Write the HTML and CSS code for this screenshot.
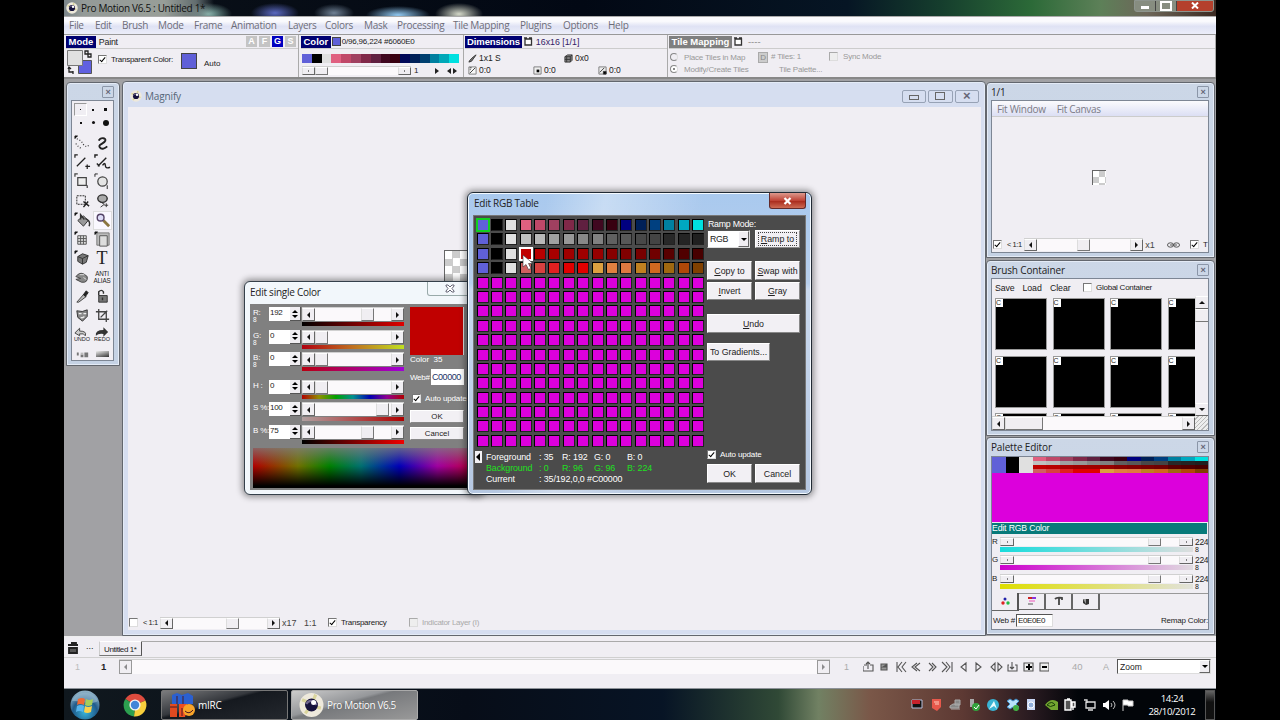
FILE: index.html
```html
<!DOCTYPE html>
<html lang="en">
<head>
<meta charset="utf-8">
<title>Pro Motion V6.5 : Untitled 1*</title>
<link rel="stylesheet" href="styles.css">
</head>
<body>
<svg width="0" height="0" class="defs">
<symbol id="eye" viewBox="0 0 24 24"><circle cx="12" cy="12" r="11.5" fill="#eee9dc"/><path d="M3 7l5 2M16 2l-2 5M21 15l-5-1M6 20l3-4" stroke="#d9d49c" stroke-width="3"/><circle cx="12" cy="12" r="6.2" fill="#16123c"/><path d="M7 11c3-5 8-3 10 1" stroke="#6f668f" stroke-width="2" fill="none"/><circle cx="14" cy="9.5" r="2.4" fill="#fff"/></symbol>
<symbol id="page" viewBox="0 0 9 9"><path d="M1 2h6.500v6H1zM0 .8h3M5 .8h3" fill="#fff" stroke="#333" stroke-width="1.300"/></symbol>
<symbol id="corner" viewBox="0 0 10 10"><path d="M1 1h8v8H1z" fill="#f8f8f8" stroke="#777"/><path d="M2 8l6-6M2 2h2M2 4h1" stroke="#333"/></symbol>
</svg>
<div class="screen">
<div class="app">
<header class="titlebar"><svg class="appicon"><use href="#eye"/></svg><span>Pro Motion V6.5 : Untitled 1*</span>
<div class="winctl"><i class="min"></i><i class="max"></i><b><svg width="8" height="7" viewBox="0 0 8 7"><path d="M1 .5l6 6M7 .5l-6 6" stroke="#fff" stroke-width="2"/></svg></b></div></header>
<nav class="menubar"><span>File</span><span>Edit</span><span>Brush</span><span>Mode</span><span>Frame</span><span>Animation</span><span>Layers</span><span>Colors</span><span>Mask</span><span>Processing</span><span>Tile Mapping</span><span>Plugins</span><span>Options</span><span>Help</span></nav>
<section class="toolbar">
<div class="panel mode"><div class="phead"><b class="tag">Mode</b><span class="paint">Paint</span><span class="flags"><b>A</b><b>F</b><b class="on">G</b><b>S</b></span></div>
<div class="modebody"><svg width="31" height="26" viewBox="0 0 31 26"><path d="M12.500 11.500h13v13h-13z" fill="#6060e0" stroke="#555"/><path d="M1.500 1.500h15v15h-15z" fill="#e0e0e0" stroke="#777"/><path d="M19 2h3v3h-3zM22 5h3v3h-3zM3 19v4h4M2 20l1-2 2 2M7 22v3" fill="none" stroke="#222" stroke-width="1.300"/></svg><i class="chk on"></i><span class="tc">Transparent Color:</span><i class="autosw"></i><span class="auto">Auto</span></div></div>
<div class="panel color"><div class="phead"><b class="tag">Color</b><i class="minisw"></i><span class="cval">0/96,96,224 #6060E0</span></div>
<div class="strip" data-colors="#6060d8,#000,#e0e0e0,#e06080,#c04868,#a04060,#802848,#602040,#400820,#380010,#000858,#002058,#004070,#0080a0,#00a8b8,#00e0e0"></div>
<div class="colscroll"><div class="scroll" data-thumb="0" data-size="13"></div><span>1</span><svg width="22" height="8" viewBox="0 0 22 8"><path d="M0 1l4 3-4 3zM16 1v6l-4-3zM18 1l4 3-4 3z" fill="#222"/></svg></div></div>
<div class="panel dims"><div class="phead"><b class="tag">Dimensions</b><svg class="pg"><use href="#page"/></svg><span class="dv">16x16 [1/1]</span></div>
<div class="drow"><span><svg viewBox="0 0 10 10"><path d="M1 9l3-1 5-7-3 2-4 4z" fill="#777" stroke="#333"/></svg>1x1 S</span><span class="wide"><svg viewBox="0 0 10 10"><path d="M1 3l3-2h5v6L7 9H1zM1 3h6v6M7 3l2-2M1 6h6M3 3v6" fill="#888" stroke="#333"/></svg>0x0</span></div>
<div class="drow three"><span><svg><use href="#corner"/></svg>0:0</span><span><svg viewBox="0 0 10 10"><path d="M1 1h8v8H1z" fill="#eee" stroke="#777"/><path d="M4 4h3v3H4z"/></svg>0:0</span><span><svg viewBox="0 0 10 10"><path d="M1 1h8v8H1z" fill="#eee" stroke="#777"/><path d="M2 7l5-5M6 6h3v3H6z" stroke="#333"/></svg>0:0</span></div></div>
<div class="panel tile"><div class="phead"><b class="tag gray">Tile Mapping</b><svg class="pg"><use href="#page"/></svg><span class="dash">----</span></div>
<div class="tgrid"><i class="radio"></i><span>Place Tiles in Map</span><em>D</em><span># Tiles: 1</span><i class="chk off"></i><span class="sync">Sync Mode</span><i class="radio on"></i><span>Modify/Create Tiles</span><span></span><span class="tp">Tile Palette...</span></div></div>
</section>
<main class="workspace"></main>
<footer class="frames"><div class="tabs"><svg class="trash" viewBox="0 0 12 13"><path d="M1 4h10M4 2h5v2M2 7h8v5H2z" fill="#555" stroke="#222" stroke-width="1.800"/></svg><span class="dots">...</span><span class="tab">Untitled 1*</span><i class="rest"></i></div>
<div class="timeline"><span class="n1">1</span><b>1</b><div class="scroll disabled" data-thumb="none"></div><span class="n2">1</span>
<svg class="play" width="186" height="12" viewBox="0 0 186 12" fill="none" stroke="#555" stroke-width="1.100"><path d="M1 4h3M7 4h3v6H0V5M5 8V1M3 3l2-2 2 2"/><path d="M18 3h6v6h-6zM20 6h3V4z" fill="#999"/><path d="M34 1v10M39 1l-4 5 4 5M43 1l-4 5 4 5M57 2l-5 4 5 4M54 2l-5 4 5 4M66 2l4 4-4 4M69 2l4 4-4 4M79 1l5 5-5 5M83 1l4 5-4 5M89 1v10M103 2v8l-5-4zM113 2v8l5-4zM132 2v8l-4-4zM135 2v8l4-4z"/><path d="M146 4h-1v6h9V4h-2M149 1v7M147 6l2 2 2-2"/><path d="M161 2h9v8h-9zM177 2h9v8h-9z" fill="#eee"/><path d="M163 6h6M166 3v6M179 6h5" stroke="#000" stroke-width="2"/></svg>
<span class="n40">40</span><span class="na">A</span><div class="select">Zoom<i></i></div></div></footer>
<div class="taskbar"><svg class="orb" viewBox="0 0 30 30"><defs><radialGradient id="og" cx=".5" cy=".75" r=".7"><stop offset="0" stop-color="#38b5dc"/><stop offset=".6" stop-color="#205b8b"/><stop offset="1" stop-color="#8cafc5"/></radialGradient></defs><circle cx="15" cy="15" r="14.500" fill="url(#og)"/><path d="M2 11C6 0 24 0 28 11c-8 5-18-1-26 0z" fill="#9bbdd0" opacity=".6"/><path d="M8 9q4-2 7 0l-1 6q-4-2-7 0z" fill="#ef6a34"/><path d="M16 9q3 2 7 0l-1 6q-4 2-7 0z" fill="#a6ce5a"/><path d="M7 16q4-2 7 0l-1 6q-4-2-7 0z" fill="#58b5ed"/><path d="M15 16q3 2 7 0l-1 6q-4 2-7 0z" fill="#fbd14c"/></svg>
<svg class="chrome" viewBox="0 0 24 24"><path d="M12 12L2.300 6A11.500 11.500 0 0 1 22.500 7.500z" fill="#dd4b3e"/><path d="M12 12l10.500-4.500A11.500 11.500 0 0 1 11 23.500z" fill="#f8cf3c"/><path d="M12 12l-1 11.500A11.500 11.500 0 0 1 2.300 6z" fill="#2c9f4f"/><circle cx="12" cy="12" r="5.600" fill="#f4f4f4"/><circle cx="12" cy="12" r="4.200" fill="#4285d8"/></svg>
<div class="task"><svg viewBox="0 0 26 26"><path d="M3 12V3l5-2 5 2 6-2 5 3v8z" fill="#2b60d0"/><path d="M1 12h7v13H1z" fill="#e14a20"/><path d="M10 12h8v6l-2 7h-6z" fill="#ed4e22"/><circle cx="20" cy="18" r="6" fill="#f7a429"/><path d="M8 4v8M14 4v8M1 15h7M13 16v8M16 19q4 4 8-1" stroke="#4a1a24" fill="none"/></svg><span>mIRC</span></div>
<div class="task active"><svg viewBox="0 0 24 24"><use href="#eye"/></svg><span>Pro Motion V6.5</span></div>
<svg class="tray" width="224" height="14" viewBox="0 0 224 14"><path d="M1 2h10v8H1z" fill="#111" stroke="#b8c0dc"/><path d="M1 2h8v4H1z" fill="#c6222b"/><path d="M21 1h9v8l-4 4-5-3z" fill="#e7584b"/><path d="M23 4h5M24 6h4" stroke="#ffd0c0"/><path d="M39 8l3-2h6v4h-9zM44 2h5v5h-5zM40 11h9" fill="#888" stroke="#aaa"/><path d="M59 1h4v8h-4z" fill="#aaa"/><circle cx="65" cy="9" r="4" fill="#33a33c"/><path d="M63 9l2 2 3-4" stroke="#fff" fill="none"/><circle cx="82" cy="7" r="6" fill="#39b3d4"/><path d="M78 11l5-8 3 8-3-3z" fill="#eafcff"/><path d="M96 3l3-2 3 2 3-2 3 2-3 3 3 3-3 2-3-2-3 2-3-2 3-3z" fill="#b9e2fa" stroke="#418bc4"/><circle cx="105" cy="10" r="3" fill="#43b044"/><path d="M116 1h8v11h-8z" fill="#c8d6f4"/><circle cx="120" cy="7" r="3" fill="#91aeda" stroke="#fff"/><path d="M134 7q6-8 13-3v8h-7z" fill="#73a730"/><path d="M136 7q5-5 8 0-5 3-8 0" fill="none" stroke="#183c08"/><path d="M154 2h6v10h-6zM156 1h3M161 4h3v5h-3zM162 9v3" fill="#555" stroke="#fff" stroke-width="1.400"/><path d="M175 4h9v6h-9zM173 2h3v3M177 12h5" stroke="#ddd" fill="none" stroke-width="1.300"/><path d="M192 5h2l4-3v10l-4-3h-2z" fill="#fff"/><path d="M200 5q2 2 0 4M202 3q4 4 0 8" stroke="#bbb" fill="none"/><path d="M212 13V2h5v1h5v5h-5V7h-5" fill="#fff" stroke="#ccc"/></svg>
<div class="clock">14:24<br>28/10/2012</div><i class="desk"></i></div>
</div>

<section class="win tools"><div class="wtitle"><i class="x"></i></div><div class="inner">
<div class="dots6"><i></i><i></i><i></i><i></i><i></i><i></i></div>
<div class="toolgrid">
<svg viewBox="0 0 18 18"><path d="M1 4V1h3" stroke="#222"/><path d="M3 4q5 2 7 6t7 0M2 9q3 5 7 5" fill="none" stroke="#333" stroke-width="1.300" stroke-dasharray="1 2"/></svg>
<svg viewBox="0 0 18 18"><path d="M5 6C7 2 13 3 12 6S4 10 6 13s6 1 8-1" fill="none" stroke="#222" stroke-width="2"/></svg>
<svg viewBox="0 0 18 18"><path d="M1 4V1h3M3 13L12 4M14 11v5M12 13h5" stroke="#222" fill="none" stroke-width="1.300"/></svg>
<svg viewBox="0 0 18 18"><path d="M1 4V1h3M4 13l9-9M3 10l3 3M9 12q3-4 3 0t5 2" stroke="#222" fill="none" stroke-width="1.500"/></svg>
<svg viewBox="0 0 18 18"><path d="M1 4V1h3M4 5h9v8H4zM14 13v3" stroke="#444" fill="#eee" stroke-width="1.300"/></svg>
<svg viewBox="0 0 18 18"><path d="M1 4V1h3M14 13v4" stroke="#222" fill="none"/><circle cx="9" cy="9" r="5" fill="#e4e4e4" stroke="#444" stroke-width="1.300"/></svg>
<svg viewBox="0 0 18 18"><path d="M3 4h9v9H3z" fill="none" stroke="#222" stroke-dasharray="2 1"/><path d="M10 10l6 5M15 10l-5 6" stroke="#222" stroke-width="1.500"/></svg>
<svg viewBox="0 0 18 18"><ellipse cx="9" cy="7" rx="5" ry="4" fill="#aaa" stroke="#333" stroke-width="1.500"/><path d="M6 10l5 3-4 3M13 12v4M11 14h4" stroke="#333" fill="none"/></svg>
<svg viewBox="0 0 18 18"><path d="M1 4V1h3" stroke="#222"/><path d="M4 9l6-5 5 5-5 6z" fill="#999" stroke="#333"/><path d="M12 7q6 2 4 8M7 8V3l4 5" stroke="#333" fill="none" stroke-width="1.500"/></svg>
<svg class="sel" viewBox="0 0 18 18"><path d="M10 9l6 6" stroke="#8b7640" stroke-width="3"/><circle cx="7" cy="6" r="3.600" fill="#dddcf6" stroke="#554467" stroke-width="1.500"/></svg>
<svg viewBox="0 0 18 18"><path d="M1 4V1h3" stroke="#222"/><path d="M4 5h9v9H4zM4 8h9M4 11h9M7 5v9M10 5v9" stroke="#555" fill="#ddd"/></svg>
<svg viewBox="0 0 18 18"><path d="M3 2h13v13H3z" fill="#bbb" stroke="#777"/><path d="M6 5h8v11H6z" fill="#ddd" stroke="#555"/><path d="M1 4V1h3" stroke="#222"/></svg>
<svg viewBox="0 0 18 18"><path d="M1 4V1h3" stroke="#222"/><path d="M4 7l5-3 6 2-2 7-4 2-5-3zM4 7l5 2v6M9 9l6-3" fill="#777" stroke="#333"/></svg>
<span class="T">T</span>
<svg viewBox="0 0 18 18"><path d="M2 8q5-7 12 0 1 7-6 6L2 11l5-1z" fill="#888" stroke="#444"/><path d="M6 6h5M10 9l3 2" stroke="#ddd"/></svg>
<span class="anti">ANTI<br>ALIAS</span>
<svg viewBox="0 0 18 18"><path d="M3 15l7-8 3 2-8 6z" fill="#bbb" stroke="#444"/><path d="M10 7l3-4 2 2-3 4z" fill="#222" stroke="#222"/></svg>
<svg viewBox="0 0 18 18"><path d="M5 8h9v7H5z" fill="#777" stroke="#333"/><path d="M5 8V4q3-3 5 0v2M9 10v3" fill="none" stroke="#333" stroke-width="1.500"/></svg>
<svg viewBox="0 0 18 18"><path d="M3 4q6 2 11-1v7l-5 5-5-4z" fill="#888" stroke="#333"/><path d="M5 7h3M10 7h3M7 11q2 1 4-1" stroke="#eee" stroke-width="1.500"/></svg>
<svg viewBox="0 0 18 18"><path d="M5 2v11h11M2 5h11v11M7 11l7-7" fill="none" stroke="#444" stroke-width="1.400"/></svg>
<div class="ur"><svg viewBox="0 0 18 10"><path d="M2 6l5-5v3q8 0 6 5-1-3-6-2v2z" fill="#ccc" stroke="#444"/></svg><span>UNDO</span></div>
<div class="ur"><svg viewBox="0 0 18 10"><path d="M16 5l-5-5v3q-9 0-8 6 3-3 8-2v3z" fill="#333"/></svg><span>REDO</span></div>
<svg viewBox="0 0 18 18"><path d="M3 7h2v3H3zM7 9h3v3H7zM11 7h4v5h-4z" fill="#777"/><path d="M7 7h3v2H7z" fill="#bbb"/></svg>
<i class="grad"></i>
</div></div></section>

<section class="win magnify"><div class="wtitle"><svg><use href="#eye"/></svg><span>Magnify</span><div class="wb"><i class="b1"></i><i class="b2"></i><i class="x"></i></div></div>
<div class="inner"><div class="mrow"><i class="chk"></i><span class="lt">&lt; 1:1</span><div class="scroll" data-thumb="53" data-size="13"></div><span class="z">x17</span><span class="z">1:1</span><i class="chk on"></i><span class="tr">Transparency</span><i class="chk off"></i><span class="il">Indicator Layer (I)</span></div></div></section>
<div class="checker canvas"></div>

<section class="win nav"><div class="wtitle"><span>1/1</span><i class="x"></i></div><div class="inner"><div class="fit"><span>Fit Window</span><span>Fit Canvas</span></div><div class="view"><div class="checker mini"></div></div><div class="nrow"><i class="chk on"></i><span class="lt">&lt; 1:1</span><div class="scroll" data-thumb="40" data-size="13"></div><span class="z">x1</span><svg width="13" height="8" viewBox="0 0 13 8"><ellipse cx="3.500" cy="4" rx="3" ry="2.200" fill="none" stroke="#555"/><ellipse cx="9.500" cy="4" rx="3" ry="2.200" fill="none" stroke="#555"/><path d="M3 4h7" stroke="#555"/></svg><i class="chk on"></i><span class="t">T</span></div></div></section>

<section class="win brush"><div class="wtitle"><span>Brush Container</span><i class="x"></i></div><div class="inner"><div class="brow"><span>Save</span><span>Load</span><span>Clear</span><i class="chk"></i><span class="gc">Global Container</span></div>
<div class="barea"><div class="tiles" id="tiles"></div><div class="vscroll"><i class="ab up"></i><i class="thumb"></i><u></u><i class="ab down"></i></div></div>
<div class="hs"><div class="scroll" data-thumb="0" data-size="38"></div><i class="grip"></i></div></div></section>

<section class="win palette"><div class="wtitle"><span>Palette Editor</span><i class="x"></i></div><div class="inner"><div class="pal" id="pal"></div><div class="mag"></div><div class="teal">Edit RGB Color</div>
<div class="chan"><span>R</span><div><div class="scroll" data-thumb="134" data-size="13"></div><i class="bar c"></i></div><span class="v">224<small>8</small></span></div>
<div class="chan"><span>G</span><div><div class="scroll" data-thumb="134" data-size="13"></div><i class="bar m"></i></div><span class="v">224<small>8</small></span></div>
<div class="chan"><span>B</span><div><div class="scroll" data-thumb="134" data-size="13"></div><i class="bar y"></i></div><span class="v">224<small>8</small></span></div>
<div class="ptabs"><span class="cur"><svg viewBox="0 0 10 10"><circle cx="5" cy="3" r="1.500" fill="#22a"/><circle cx="3" cy="7" r="1.700" fill="#d22"/><circle cx="8" cy="7" r="1.700" fill="#2b4"/></svg></span><span><svg viewBox="0 0 10 10"><path d="M1 2h4" stroke="#c22" stroke-width="2"/><path d="M5 2h4" stroke="#83d" stroke-width="2"/><path d="M2 5h6" stroke="#e5b" /><path d="M1 8h5" stroke="#555"/></svg></span><span><svg viewBox="0 0 10 10"><path d="M1 3q2-2 7-1v2M5 2v7" fill="none" stroke="#444" stroke-width="1.800"/></svg></span><span><svg viewBox="0 0 10 10"><path d="M2 3h6v5l-3 1-3-2z" fill="#333"/><path d="M2 3h3v5" fill="#999"/></svg></span></div>
<div class="webrow"><span>Web #</span><em>E0E0E0</em><span class="rm">Remap Color:</span></div></div></section>

<section class="dlg single"><div class="dtitle"><span>Edit single Color</span><b class="close"><svg width="10" height="9" viewBox="0 0 10 9"><path d="M1 1h2l2 2 2-2h2v1L7 4.500 9 7v1H7L5 6 3 8H1V7l2-2.500L1 2z" fill="#fff" stroke="#667"/></svg></b></div>
<div class="sbody"><div class="scols"><div class="srows">
<div class="srow"><span>R:<small>8</small></span><em>192</em><i class="spin"></i><div><div class="scroll" data-thumb="46" data-size="13"></div><i class="bar" style="background:linear-gradient(90deg,#000,#e00000)"></i></div></div>
<div class="srow"><span>G:<small>8</small></span><em>0</em><i class="spin"></i><div><div class="scroll" data-thumb="0" data-size="13"></div><i class="bar" style="background:linear-gradient(90deg,#b00010,#c07020,#c0e020)"></i></div></div>
<div class="srow gap"><span>B:<small>8</small></span><em>0</em><i class="spin"></i><div><div class="scroll" data-thumb="0" data-size="13"></div><i class="bar" style="background:linear-gradient(90deg,#b80010,#a000d8)"></i></div></div>
<div class="srow"><span>H :</span><em>0</em><i class="spin"></i><div><div class="scroll" data-thumb="0" data-size="13"></div><i class="bar" style="background:linear-gradient(90deg,#b00000,#909000,#00a000,#009090,#0000b0,#900090,#b00000)"></i></div></div>
<div class="srow"><span>S %:</span><em>100</em><i class="spin"></i><div><div class="scroll" data-thumb="61" data-size="13"></div><i class="bar" style="background:linear-gradient(90deg,#b0a0a0,#b00000)"></i></div></div>
<div class="srow"><span>B %:</span><em>75</em><i class="spin"></i><div><div class="scroll" data-thumb="46" data-size="13"></div><i class="bar" style="background:linear-gradient(90deg,#000,#f00000)"></i></div></div>
</div><div class="sright"><div class="red"></div><span class="c35">Color&nbsp; 35</span><div class="web"><span>Web#</span><em>C00000</em></div><div class="au"><i class="chk on"></i>Auto update</div><div class="btn">OK</div><div class="btn">Cancel</div></div></div><div class="spectrum"></div></div></section>

<section class="dlg rgb"><div class="dtitle"><span>Edit RGB Table</span><b class="close red"><svg width="9" height="8" viewBox="0 0 9 8"><path d="M1.500 1l6 6M7.500 1l-6 6" stroke="#fff" stroke-width="2.200"/></svg></b></div>
<div class="rbody"><div class="rleft"><div class="swatches" id="swatches"></div><div class="info"><i class="ib"></i><div class="ig"><span>Foreground</span><span>: 35</span><span>R: 192</span><span>G: 0</span><span>B: 0</span></div><div class="ig green"><span>Background</span><span>: 0</span><span>R: 96</span><span>G: 96</span><span>B: 224</span></div><div class="ig"><span>Current</span><span>: 35/192,0,0 #C00000</span></div></div></div>
<div class="rright"><span class="rml">Ramp Mode:</span><div class="pair p1"><div class="select">RGB<i></i></div><div class="btn focus"><span><u>R</u>amp to</span></div></div>
<div class="pair p2"><div class="btn"><span><u>C</u>opy to</span></div><div class="btn"><span><u>S</u>wap with</span></div></div>
<div class="pair p3"><div class="btn"><span><u>I</u>nvert</span></div><div class="btn"><span><u>G</u>ray</span></div></div>
<div class="btn undo"><span><u>U</u>ndo</span></div><div class="btn tog">To Gradients...</div>
<div class="au"><i class="chk on"></i>Auto update</div><div class="pair p4"><div class="btn">OK</div><div class="btn">Cancel</div></div></div></div></section>
<svg class="cursor" viewBox="0 0 12 17"><path d="M1 1v12l3-2.500 2.500 5 2.500-1-2.500-5H11z" fill="#fff" stroke="#333" stroke-width=".6"/></svg>
</div>
<script src="app.js"></script>
</body>
</html>
```

FILE: styles.css
```css
*{box-sizing:border-box}
body{margin:0;background:#000;font:9.5px "Liberation Sans",sans-serif;color:#222}
i,em{font-style:normal}
.defs{position:absolute}
svg{flex:none}
.screen{position:relative;width:1280px;height:720px;overflow:hidden;background:#000}
.app{width:1152px;height:720px;margin-left:64px;display:flex;flex-direction:column;background:#f0eef3}
.titlebar{height:17px;flex:none;display:flex;align-items:center;padding:0 2px;font:10px "Open Sans",sans-serif;letter-spacing:-.32px;color:#111;background:
linear-gradient(90deg,#7c868a,#949a98 20px,#989e98 100px,rgba(128,140,140,.75) 132px,transparent 150px),
radial-gradient(ellipse 24px 11px at 144px 14px,#8ab8b0,transparent),
radial-gradient(ellipse 24px 10px at 211px 13px,#5a68c0,transparent),
radial-gradient(ellipse 20px 9px at 270px 13px,#6f8195,transparent),
radial-gradient(ellipse 32px 9px at 334px 15px,#90c8f0,transparent),
radial-gradient(ellipse 24px 11px at 395px 14px,#d4d8c8,transparent),
linear-gradient(90deg,#0b1118,#020814 45%,#061524 68%,#153d2d 76%,#2c6a38 84%,#5d8058 90%,#6d6659 94%,#3b2a22);border-bottom:1px solid #aaa}
.appicon{width:12px;height:12px;margin-right:3px}
.winctl{margin-left:auto;display:flex;height:12px;width:80px;margin-top:-5px;border:1px solid #8e958e;border-radius:0 0 3px 3px;background:#878d80;overflow:hidden}
.winctl i{width:21px;border-right:1px solid #444;display:flex;align-items:center;justify-content:center}
.min:before{content:"";width:8px;height:3px;background:#fff;margin-top:3px}
.max:before{content:"";width:8px;height:6px;border:2px solid #fff}
.winctl b{flex:1;background:#b4402c;display:flex;align-items:center;justify-content:center}
.menubar{height:17px;flex:none;display:grid;grid-template-columns:26px 27px 36px 36px 37px 57px 37px 39px 33px 56px 67px 43px 45px 40px;padding-left:5px;font:10px/17px "Open Sans",sans-serif;letter-spacing:-.28px;color:#6d6d78;background:linear-gradient(#fafafd 25%,#dfe2f4 55%,#eceef9);white-space:nowrap}
.toolbar{height:45px;flex:none;display:grid;grid-template-columns:235px 165px 204px 1fr;border-top:1px solid #999;border-bottom:2px solid #888;background:#f0eef3;white-space:nowrap;overflow:hidden}
.panel{border-right:1px solid #aaa;padding-left:2px;height:42px}
.phead{height:14px;display:flex;align-items:center;border-bottom:1px solid #ccc}
.tag{background:#000070;color:#fff;font-size:9.5px;line-height:12px;height:12px;padding:0 2.5px}
.tag.gray{background:#7f7f7f}
.paint{margin-left:3px;font-size:8.8px;letter-spacing:-.2px}
.flags{margin-left:auto;display:flex;gap:2px;padding-right:2px}
.flags b{width:11px;height:11px;background:#c4c4c4;color:#fff;text-align:center;font-size:9px;line-height:11px}
.flags .on{background:#0000c0}
.modebody{display:flex;height:27px}
.chk{display:block;width:9px;height:9px;flex:none;background:#fff;border:1px solid #777;border-right-color:#ddd;border-bottom-color:#ddd}
.chk.on:before{content:"";display:block;width:2px;height:5px;border:solid #000;border-width:0 1.5px 1.5px 0;transform:rotate(40deg);margin:0 0 0 2px}
.chk.off{background:#eee;border-color:#aaa #ddd #ddd #aaa}
.modebody .chk{margin:6px 0 0 1px}
.tc{margin:6px 0 0 4px;width:70px;font-size:8px;letter-spacing:-.25px}
.autosw{width:16px;height:16px;background:#6060d8;border:1px solid #444;margin-top:4px}
.auto{margin:10px 0 0 7px;font-size:8px}
.minisw{width:9px;height:9px;margin:0 1px 0 1px;background:#6060d8;border:1px solid #444}
.color .phead{letter-spacing:-.2px}.color .tag{letter-spacing:0}
.cval{font-size:8px}
.strip{display:flex;width:157px;height:9px;margin:5px 0 0 1px}
.strip i{flex:1}
.colscroll{display:flex;margin:3px 0 0 1px;align-items:center;height:9px;font-size:8px}
.colscroll .scroll{width:109px;height:9px}
.colscroll span{margin:0 17px 0 3px}
.scroll{display:flex;height:12px;background:#fbf9fb;border-top:1px solid #d0d0d0}
.ab{width:13px;height:100%;flex:none;background:#f0eef2;border:1px solid;border-color:#fff #666 #666 #ddd;display:flex;align-items:center;justify-content:center}
.ab:before{content:"";border:3.2px solid transparent}
.ab.l:before{border-right-color:#111;border-left:0}.ab.r:before{border-left-color:#111;border-right:0}
.up:before{border-bottom-color:#111;border-top:0}.down:before{border-top-color:#111;border-bottom:0}
.track{flex:1;display:flex}
.thumb{display:block;height:100%;background:#f0eef2;border:1px solid;border-color:#fff #777 #777 #ddd}
.colscroll .ab:before,.chan .ab:before{border-width:1.6px}
.disabled .ab{opacity:.45}
.pg{width:9px;height:9px;margin-left:2px}
.dims,.tile{padding-left:1px}
.dims .tag{padding:0 2px;letter-spacing:-.1px}
.dv{margin-left:3px;font-size:8.8px;color:#326}
.drow{display:flex;height:12px;align-items:center;padding-left:3px;font-size:8.5px;margin-top:3px}
.drow.three{margin-top:0}
.drow span{display:flex;width:65px;gap:2px;align-items:center}
.drow .wide{margin-left:31px}
.drow svg{width:9px;height:9px}
.dash{margin-left:5px;color:#888}
.tgrid{display:grid;grid-template-columns:14px 74px 13px 58px 14px 60px;grid-template-rows:12px 12px;padding:2px 0 0 1px;font-size:8px;letter-spacing:-.2px;color:#999;align-items:center}
.radio{width:8px;height:8px;border:1px solid #888;border-right-color:#ddd;border-radius:50%}
.radio.on{background:radial-gradient(#888 25%,#fff 30%)}
.tgrid em{width:10px;height:11px;border:1px solid #aaa;background:#ccc;color:#888;text-align:center;line-height:9px}
.tgrid .tp{padding-left:8px}
.tgrid span:nth-child(4),.tgrid .sync,.tgrid .off{margin-top:-2px}
.workspace{height:557px;flex:none;background:#a1a1a4}
.frames{height:52px;flex:none;background:#f0eef3;border-top:1px solid #eee}
.tabs{height:21px;display:flex;padding-top:4px;border-bottom:1px solid #d0d0d0}
.trash{width:12px;height:13px;margin:0 0 0 3px}
.dots{width:20px;padding-left:7px;font-size:9px}
.tab{width:43px;height:15px;border:1px solid;border-color:#fff #555 #777 #ccc;font-size:8px;letter-spacing:-.4px;line-height:15px;padding-left:4px;white-space:nowrap}
.rest{flex:1;border-top:1px solid #aaa}
.timeline{display:flex;align-items:center;height:17px}
.n1{width:27px;padding-left:11px;color:#bbb;font-size:9px}
.timeline b{width:28px;padding-left:10px}
.timeline .scroll{width:711px;height:15px}
.timeline .ab{opacity:1;border-color:#999}
.timeline .ab:before{opacity:.45}
.n2{margin-left:14px;width:19px;color:#aaa;font-size:9px}
.n40{margin-left:23px;width:31px;color:#aaa}
.na{width:14px;color:#aaa;font-size:9px}
.select{display:flex;background:#fff;color:#222;border:1px solid;border-color:#555 #ddd #ddd #555;font-size:8.5px;align-items:center;padding-left:2px;width:94px;height:15px}
.select i{margin-left:auto;width:11px;height:100%;background:#f0eef2;border:1px solid;border-color:#fff #666 #666 #fff;display:flex;align-items:center;justify-content:center}
.select i:before{content:"";border:3px solid transparent;border-top-color:#000;border-bottom:0}
.taskbar{height:32px;flex:none;display:flex;align-items:center;border-top:1px solid #8d9298;background:linear-gradient(90deg,#10181e,#070d18 35%,#071425 52%,#304936 62%,#718163 65.500%,#7a5748 70%,#5d3933 78%,#281a20 84%,#020509 88%,#020509);color:#fff}
.orb{width:30px;height:30px;margin-left:6px}
.chrome{width:24px;height:24px;margin:1px 14px 0 23px}
.task{flex:none;width:127px;height:30px;margin-right:3px;border:1px solid #777;border-radius:2px;background:linear-gradient(165deg,#7b7c7e,#35383d 40%,#15191f 45%,#24282e);display:flex;align-items:center;font:10px "Open Sans",sans-serif;letter-spacing:-.28px}
.task svg{width:26px;height:26px;margin:0 3px 0 7px}
.task.active svg{width:25px;margin-right:3px}
.task.active{border-color:#aaa;background:linear-gradient(165deg,#ccc,#95979a 40%,#77797c 45%,#999)}
.task.active span{color:#fff;text-shadow:0 0 1px #555;letter-spacing:-.38px}
.tray{margin-left:490px}
.clock{flex:none;width:58px;margin-left:8px;text-align:center;font:9.6px/13px "Open Sans",sans-serif;letter-spacing:-.4px}
.desk{flex:none;width:10px;height:30px;margin-left:4px;border:1px solid #555;background:linear-gradient(#666,#111 40%)}

.win{position:absolute;border:1px solid #63676e;border-radius:4px 4px 0 0;background:linear-gradient(#ccd7e7,#c5d2e4);box-shadow:inset 0 0 0 1px #e4ebf6;display:flex;flex-direction:column;padding:0 5px 4px 4px;overflow:hidden}
.wtitle{height:18px;flex:none;display:flex;align-items:center;font:10px "Open Sans",sans-serif;letter-spacing:-.15px;color:#222}
.x{width:12px;height:12px;margin-left:auto;border:1px solid #8b96a8;border-radius:1px;display:flex;align-items:center;justify-content:center}
.x:before{content:"×";font:bold 9px/8px "Liberation Sans",sans-serif;color:#667;border:0}
.inner{flex:1;min-height:0;border:1px solid #7d8694;background:#f0eef3;overflow:hidden}
.tools{left:66px;top:82px;width:54px;height:284px;padding:0 5px 4px 4px}
.tools .wtitle{height:17px}
.tools .inner{padding:2px 0}
.dots6{display:grid;grid-template-columns:13px 12.500px 12.500px;grid-template-rows:13px 13px;margin-left:2px}
.dots6 i{display:flex;align-items:center;justify-content:center}
.dots6 i:before{content:"";width:2px;height:2px;background:#111}
.dots6 i:nth-child(1){border:1px solid;border-color:#999 #fff #fff #999}.dots6 i:nth-child(1):before{width:1px;height:1px}
.dots6 i:nth-child(3):before{width:3px;height:3px}
.dots6 i:nth-child(5):before{width:3px;height:3px;border-radius:50%}
.dots6 i:nth-child(6):before{width:6px;height:6px;border-radius:50%}
.toolgrid{display:grid;grid-template-columns:20px 20px;grid-template-rows:repeat(12,19.150px);margin:5px 0 0 0;place-items:center}
.toolgrid svg{width:17px;height:17px}
.toolgrid .sel{outline:1px solid #ddd;background:#faf8ff}
.T{font:18px/17px "Liberation Serif",serif}
.anti{font:6.300px/6.500px "Liberation Sans",sans-serif;text-align:center;letter-spacing:-.2px}
.ur{text-align:center;font-size:5.500px;line-height:5px;width:18px}
.toolgrid .ur svg{display:block;width:17px;height:10px}
.grad{width:13px;height:6px;background:linear-gradient(165deg,#eee,#333)}
.magnify{left:122px;top:81px;width:864px;height:555px;padding:0 4px 5px 5px;background:#d6def0}
.magnify .wtitle{height:25px;padding:3px 0 0 0;margin:0 -5px 0 0;color:#567}
.magnify .wtitle svg{width:12px;height:12px;margin:0 3px 0 2px}
.magnify .inner{border:0;display:flex;flex-direction:column;justify-content:flex-end}
.wb{margin-left:auto;display:flex;gap:2px;padding-right:7px}
.wb i,.wb .x{width:24.500px;height:13px;border:1px solid #97a2b5;border-radius:2px;display:flex;align-items:center;justify-content:center;margin:0}
.wb .b1:before{content:"";width:8px;height:3px;border:1px solid #666;margin-top:3px}
.wb .b2:before{content:"";width:8px;height:6px;border:1.500px solid #666}
.wb .x:before{font-size:13px}
.mrow{height:15px;display:flex;align-items:center;padding-left:1px;font-size:8px;white-space:nowrap}
.lt{width:22px;padding-left:5px;font-size:7.500px;letter-spacing:-.45px}
.mrow .scroll{width:120px}
.z{font-size:9px;padding-left:2px;width:23px;color:#444}
.mrow .z+.z{width:25px;padding-left:1px}
.tr{width:71px;padding-left:4px;letter-spacing:-.25px}
.mrow .off{margin-left:1px}
.il{padding-left:4px;color:#aaa;letter-spacing:-.3px}
.checker{background:conic-gradient(#ccc 25%,#fff 0 50%,#ccc 0 75%,#fff 0) 0 0/12px 12px;border:1px solid #666}
.canvas{position:absolute;left:444px;top:250px;width:60px;height:60px;background-size:15px 15px}
.nav{left:986px;top:82px;width:229px;height:176px}
.nav .wtitle,.brush .wtitle{height:17px}
.nav .inner{display:flex;flex-direction:column}
.fit{height:16px;display:flex;gap:11px;padding-left:5px;font:10px/16px "Open Sans",sans-serif;letter-spacing:-.3px;color:#7b7b86;background:linear-gradient(#fbfbfd,#dcdff4);border-bottom:1px solid #ccc}
.view{flex:1;display:flex;padding:53px 0 0 100px}
.mini{width:14px;height:15px;border-right:0;border-bottom:0}
.nrow{height:15px;display:flex;align-items:center;padding-left:1px;white-space:nowrap}
.nrow .scroll{width:121px;height:13px}
.nrow .z{width:24px}.nrow .chk+.t{font-size:8px;padding-left:4px}.nrow svg+.chk{margin-left:10px}
.brush{left:986px;top:260px;width:229px;height:176px}
.brow{display:flex;height:17px;align-items:center;padding-left:3px;font-size:8.8px;letter-spacing:-.1px;white-space:nowrap}
.brow span{width:27.500px}.brow span:nth-child(3){width:33px}
.brow .gc{width:90px;padding-left:4px;font-size:8px;letter-spacing:-.25px}
.barea{display:flex;height:120px}
.tiles{width:203px;height:120px;flex:none;padding:2px 0 0 3px;display:grid;grid-template-columns:repeat(4,52px);grid-template-rows:repeat(3,52px);gap:5.500px;overflow:hidden}
.tiles i{background:#000;border:1px solid #999}
.tiles i:before{content:"C";display:block;width:7px;height:8px;background:#fff;font-size:7px;line-height:8px}
.vscroll{width:14px;display:flex;flex-direction:column}
.vscroll .ab{width:14px;height:13px}.vscroll .thumb{height:13px}.vscroll u{flex:1}
.hs{display:flex;height:14px}.hs .scroll{width:204px;height:14px}
.grip{width:13px;background:repeating-linear-gradient(135deg,#eee 0 2px,#bbb 2px 3px)}
.palette{left:986px;top:437px;width:229px;height:198px}
.palette .wtitle{padding-bottom:1px}
.pal{height:16px;display:grid;grid-template-columns:repeat(16,13.500px);grid-template-rows:repeat(4,4px)}
.mag{height:49px;background:#dc00dc}
.teal{height:11px;margin:1px 1px 3px 0;background:#087a7a;color:#fff;font-size:8.700px;line-height:11px;letter-spacing:-.15px}
.chan{height:18.300px;display:grid;grid-template-columns:8px 193px 20px;font-size:8px;line-height:10px}
.chan .scroll{height:9px}.bar{display:block;height:5px;margin-top:1px}
.chan .scroll .ab{width:14px}
.v{padding-left:2px;font-size:8.500px;letter-spacing:-.3px}.v small{display:block;font-size:7px;line-height:6px}
.bar.c{background:linear-gradient(90deg,#18dcdc,#dedede)}.bar.m{background:linear-gradient(90deg,#cd00cd,#e0dbe0)}.bar.y{background:linear-gradient(90deg,#dede00,#e2e2dc)}
.ptabs{display:flex;height:19px;margin-top:1px;border-top:1px solid #999}
.ptabs span{width:27px;height:16px;border-right:2px solid #666;border-bottom:1px solid #666;display:flex;align-items:center;justify-content:center}
.ptabs .cur{margin-top:-1px;background:#f0eef3;height:18px;border-right-color:#555}
.ptabs svg{width:10px;height:10px}
.webrow{display:flex;align-items:center;height:18px;padding-left:1px;font-size:8px;letter-spacing:-.2px;white-space:nowrap}
.webrow em{width:37px;height:13px;margin-left:1px;border:1px solid;border-color:#555 #ddd #ddd #555;background:#fff;line-height:12px;padding-left:1px;letter-spacing:-.4px}
.rm{margin-left:auto}

.dlg{position:absolute;border:1px solid #35404a;border-radius:6px;display:flex;flex-direction:column;box-shadow:0 0 6px 2px rgba(0,0,0,.4),inset 0 0 0 1px #f4faff;overflow:hidden}
.dtitle{display:flex;height:22px;flex:none;font:10px/21px "Open Sans",sans-serif;letter-spacing:-.25px}
.close{margin-left:auto;display:flex;align-items:center;justify-content:center}
.single{left:244px;top:281px;width:240px;height:214px;background:#f2f7fb;padding:0 5px}
.single .close{width:46px;height:14px;margin-right:5px;border:1px solid #9aa;border-top:0;border-radius:0 0 3px 3px}
.sbody{height:186px;background:#808080;padding:3px 0 2px 3px;color:#fff}
.scols{display:flex;height:141px}
.srows{width:157px}
.srow{display:grid;grid-template-columns:16px 21px 11px 1fr;height:22.500px;padding-right:6px;font-size:8px}
.srow > div{padding-left:1px}
.srow.gap{margin-bottom:5px}
.srow>span{line-height:10px;letter-spacing:-.2px;padding-top:1px;white-space:nowrap}.srow small{display:block;font-size:6.500px;line-height:4px}
.srow em{background:#fff;color:#222;height:14px;line-height:11px;padding-left:1px;letter-spacing:-.3px}
.spin{height:14px;background:#f0eef2;border-right:1px solid #555;border-bottom:1px solid #555;display:flex;flex-direction:column;align-items:center;justify-content:center;gap:2px}
.spin:before,.spin:after{content:"";border:3px solid transparent}
.spin:before{border-top:0;border-bottom-color:#000}.spin:after{border-bottom:0;border-top-color:#000}
.srow .scroll{height:14px}.srow .bar{height:4px}
.sright{width:54px;font-size:8px;padding-top:0;white-space:nowrap}
.sright .red{height:48px;background:#c00000;border-right:1px solid #ddd}
.c35{display:block;line-height:10px;height:14px}
.web{display:flex;align-items:center;height:16px;letter-spacing:-.3px}
.web em{width:33px;margin-left:auto;height:16px;background:#fff;color:#236;line-height:16px;padding-left:1px;font-size:9px;letter-spacing:-.45px}
.au{display:flex;align-items:center;color:#fff;font-size:8px;gap:4px;letter-spacing:-.15px;white-space:nowrap}
.sright .au{height:25px;padding:2px 0 0 2px}
.btn{background:#f2f0f4;color:#222;border:1px solid;border-color:#fff #888 #888 #fff;display:flex;align-items:center;justify-content:center;font-size:8.800px;white-space:nowrap}
.sright .btn{height:13px;margin-bottom:4px;font-size:7.800px}
.spectrum{height:40px;background:linear-gradient(rgba(128,128,128,.75),transparent 45%,#000 95%),linear-gradient(90deg,#b00000,#707000 20%,#008000 34%,#007070 48%,#0000b8 65%,#a000a0 82%,#c00030)}
.rgb{left:467px;top:192px;width:345px;height:303px;background:linear-gradient(100deg,rgba(255,255,255,0) 20%,rgba(255,255,255,.35) 35%,rgba(255,255,255,0) 60%),linear-gradient(#a9c9ee,#b8cfec 30%,#cad9ee 32%,#b6c8e2);padding:0 5px;border-color:#202a34}
.rgb .dtitle{padding-left:1px}
.rgb .close{width:37px;height:16px;background:linear-gradient(#dd998d,#bf4436 50%,#a8281a 52%,#cd6c54);border:1px solid #632a2a;border-top:0;border-radius:0 0 3px 3px}
.rbody{height:275px;background:#4b4b4b;display:flex;color:#fff;border:1px solid #777}
.rleft{width:233px;flex:none}
.swatches{display:grid;grid-template-columns:repeat(16,14.390px);grid-template-rows:repeat(16,14.400px);padding:3px 0 0 2.600px;height:235px}
.swatches i{width:12px;height:12px;border:1px solid #000;border-right-color:#222;border-bottom-color:#222}
.swatches .fg{border:2px solid #fff;width:14px;height:14px;margin:-1px}
.swatches .bg{border:2px solid #10d020;width:14px;height:14px;margin:-1px}
.info{font-size:8.900px;display:grid;grid-template-columns:12px 1fr;grid-auto-rows:10.800px;letter-spacing:-.1px;white-space:nowrap;padding-top:1px}
.ib{width:7px;height:12px;margin:-1px 0 0 1px;background:#f2f0f4;display:flex;align-items:center;grid-row:1}
.ib:before{content:"";border:4px solid transparent;border-right-color:#000;border-left:0;margin-left:1px}
.ig{grid-column:2;display:grid;grid-template-columns:53px 23px 32px 33px 50px;align-items:center}
.green{color:#20e020}
.rright{width:94px;display:flex;flex-direction:column}
.rml{font-size:8.800px;line-height:16px;height:14px;padding-left:1px;letter-spacing:-.25px;white-space:nowrap}
.pair{display:grid;grid-template-columns:45px 45px;gap:3px;height:18px}
.p1 .select{width:43px;height:18px;font-size:8.800px;letter-spacing:-.3px}
.p2{margin-top:13px;height:19px}.p3{margin-top:2px}
.focus span{outline:1px dotted #444;padding:1px 2px}
.undo{height:19px;margin-top:14px;width:93px}.tog{width:63px;height:18px;margin-top:10px}
.rright .au{height:12px;margin:87px 0 4px}
.p4{height:19px}
.cursor{position:absolute;left:522px;top:254px;width:12px;height:17px}
```

FILE: app.js
```javascript
// Scroll bars: arrow, track with thumb, arrow
document.querySelectorAll('.scroll').forEach(function (el) {
  var t = el.dataset.thumb;
  var thumb = t === 'none' ? '' :
    '<i class="thumb" style="width:' + el.dataset.size + 'px;margin-left:' + t + 'px"></i>';
  el.innerHTML = '<i class="ab l"></i><div class="track">' + thumb + '</div><i class="ab r"></i>';
});

document.querySelectorAll('.strip').forEach(function (el) {
  el.innerHTML = el.dataset.colors.split(',').map(function (c) {
    return '<i style="background:' + c + '"></i>';
  }).join('');
});

var rows = [
  '#6060d8 #000 #e0e0e0 #e06080 #c04868 #a04060 #802848 #602040 #400820 #380010 #000080 #002058 #004080 #0080a0 #00a8c0 #00e0e0',
  '#6060d8 #000 #e0e0e0 #c0c0c0 #b8b8b8 #a0a0a0 #989898 #888 #808080 #606060 #585858 #484848 #444 #282828 #242424 #202020',
  '#6060d8 #000 #e0e0e0 #c00000 #b80000 #a80000 #a00000 #a00000 #980000 #880000 #800000 #780000 #700000 #580000 #500000 #480000',
  '#6060d8 #000 #e0e0e0 #d06060 #d84040 #e02020 #e00000 #e00000 #dca040 #e08040 #e07840 #c08020 #d06820 #a06810 #b04808 #804000'
].map(function (r) { return r.split(' '); });

document.getElementById('pal').innerHTML = rows.flat().map(function (c) {
  return '<i style="background:' + c + '"></i>';
}).join('');

var cells = '';
for (var y = 0; y < 16; y++) {
  for (var x = 0; x < 16; x++) {
    var cls = x === 0 && y === 0 ? 'bg' : x === 3 && y === 2 ? 'fg' : '';
    cells += '<i class="' + cls + '" style="background:' + (y < 4 ? rows[y][x] : '#dc00dc') + '"></i>';
  }
}
document.getElementById('swatches').innerHTML = cells;
document.getElementById('tiles').innerHTML = '<i></i>'.repeat(12);
```
